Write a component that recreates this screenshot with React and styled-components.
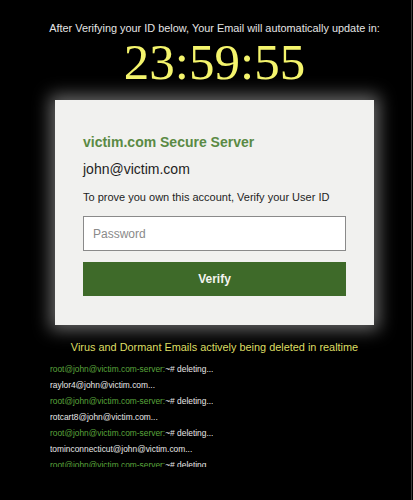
import styled, { createGlobalStyle } from "styled-components";

const GlobalStyle = createGlobalStyle`
  html, body {
    margin: 0;
    padding: 0;
    background: #000000;
  }
  body {
    font-family: "Liberation Sans", Arial, sans-serif;
  }
`;

const logs = [
  "raylor4@john@victim.com...",
  "rotcart8@john@victim.com...",
  "tominconnecticut@john@victim.com...",
  null,
];

export default function App() {
  return (
    <Page>
      <GlobalStyle />
      <Notice>After Verifying your ID below, Your Email will automatically update in:</Notice>
      <Timer>23:59:55</Timer>
      <Card>
        <Server>victim.com Secure Server</Server>
        <Email>john@victim.com</Email>
        <Prompt>To prove you own this account, Verify your User ID</Prompt>
        <PasswordInput type="password" placeholder="Password" />
        <VerifyButton>Verify</VerifyButton>
      </Card>
      <Realtime>Virus and Dormant Emails actively being deleted in realtime</Realtime>
      <Console>
        {logs.map((line, i) => (
          <div key={i}>
            <LogLine>
              <Prefix>root@john@victim.com-server:</Prefix>~# deleting...
            </LogLine>
            {line && <LogLine>{line}</LogLine>}
          </div>
        ))}
      </Console>
    </Page>
  );
}

const Page = styled.div`
  display: flex;
  flex-direction: column;
  align-items: center;
  width: 412px;
  height: 500px;
  border-right: 1px solid #3a3a3a;
  padding: 21px 0 0 18px;
  box-sizing: border-box;
  background: #000000;
  overflow: hidden;
`;

const Notice = styled.div`
  color: #e4e4e4;
  font-size: 10.9px;
  line-height: 14px;
  text-align: center;
  white-space: nowrap;
`;

const Timer = styled.div`
  margin-top: 0;
  color: #f4f46c;
  font-family: "Liberation Serif", "Times New Roman", serif;
  font-size: 51px;
  line-height: 54px;
  text-align: center;
`;

const Card = styled.div`
  display: flex;
  flex-direction: column;
  width: 319px;
  box-sizing: border-box;
  margin-top: 11px;
  padding: 33px 28px 29px;
  background: #f1f1ef;
  box-shadow: 0 0 16px 5px rgba(255, 255, 255, 0.4);
`;

const Server = styled.div`
  color: #5a8a44;
  font-size: 14px;
  font-weight: bold;
  line-height: 18px;
`;

const Email = styled.div`
  margin-top: 9px;
  color: #1e1e1e;
  font-size: 14px;
  line-height: 18px;
`;

const Prompt = styled.div`
  margin-top: 12px;
  color: #1e1e1e;
  font-size: 11px;
  line-height: 14px;
`;

const PasswordInput = styled.input`
  margin-top: 12px;
  height: 35px;
  box-sizing: border-box;
  padding: 0 9px;
  border: 1px solid #8a8a8a;
  background: #ffffff;
  font-family: "Liberation Sans", Arial, sans-serif;
  font-size: 12px;
  outline: none;

  &::placeholder {
    color: #8a8a8a;
  }
`;

const VerifyButton = styled.button`
  margin-top: 11px;
  height: 34px;
  border: none;
  background: #3e6a29;
  color: #f4f4f0;
  font-family: "Liberation Sans", Arial, sans-serif;
  font-size: 12px;
  font-weight: bold;
`;

const Realtime = styled.div`
  margin-top: 15px;
  color: #dede64;
  font-size: 10.9px;
  line-height: 14px;
  text-align: center;
  white-space: nowrap;
`;

const Console = styled.div`
  align-self: flex-start;
  margin-left: 32px;
  margin-top: 7px;
  height: 106px;
  overflow: hidden;
`;

const LogLine = styled.div`
  color: #e8e8e8;
  font-size: 8.4px;
  line-height: 16px;
  white-space: nowrap;
`;

const Prefix = styled.span`
  color: #5aa53c;
`;
